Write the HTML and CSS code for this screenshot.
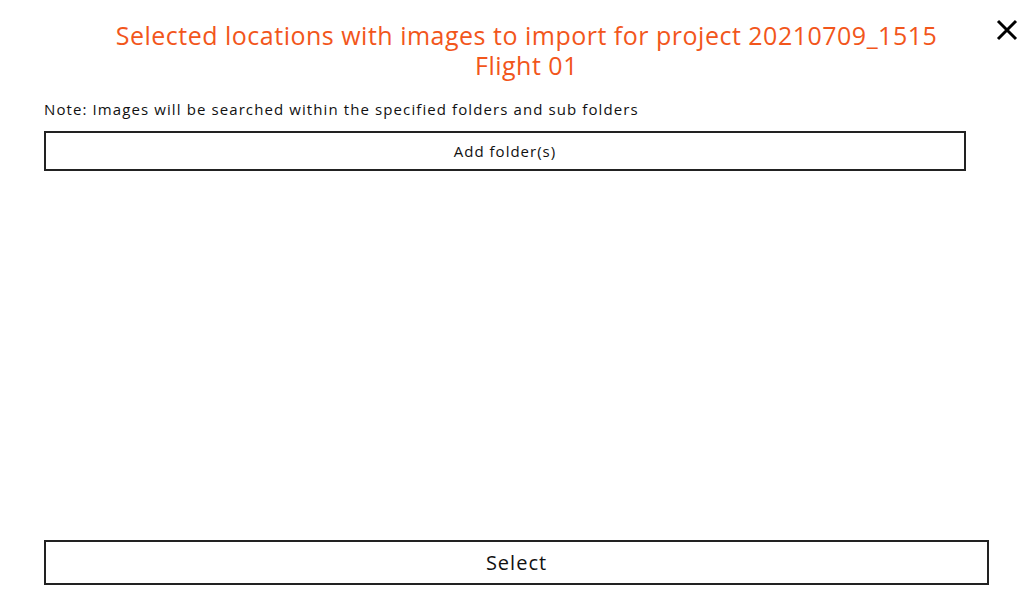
FILE: index.html
```html
<!DOCTYPE html>
<html lang="en">
<head>
<meta charset="utf-8">
<title>Select locations</title>
<link rel="stylesheet" href="styles.css">
</head>
<body>
<div class="dialog">
  <header class="dialog-header">
    <h1 class="dialog-title"><span class="title-line">Selected locations with images to import for project 20210709_1515</span><span class="title-line">Flight 01</span></h1>
    <button class="close-btn" aria-label="Close">
      <svg width="22" height="22" viewBox="0 0 22 22"><path d="M2 2 L20 20 M20 2 L2 20" stroke="#000" stroke-width="3" fill="none"/></svg>
    </button>
  </header>
  <p class="note">Note: Images will be searched within the specified folders and sub folders</p>
  <button class="add-btn">Add folder(s)</button>
  <div class="list"></div>
  <button class="select-btn">Select</button>
</div>
</body>
</html>
```

FILE: styles.css
```css
html, body {
  margin: 0;
  padding: 0;
  background: #fff;
}
body {
  font-family: "Open Sans", "Noto Sans", sans-serif;
  color: #111;
}
.dialog {
  height: 604px;
  box-sizing: border-box;
  padding: 20px 43px 19px 44px;
  display: flex;
  flex-direction: column;
  position: relative;
}
.dialog-header {
  display: flex;
  justify-content: center;
  padding-left: 20px;
}
.dialog-title {
  margin: 0;
  font-size: 25px;
  font-weight: 400;
  color: #f2561b;
  text-align: center;
  letter-spacing: 0.5px;
  display: flex;
  flex-direction: column;
  align-items: center;
}
.title-line {
  display: block;
  height: 30px;
  line-height: 30px;
}
.close-btn {
  position: absolute;
  top: 17px;
  right: 12px;
  width: 26px;
  height: 26px;
  padding: 0;
  border: 0;
  background: none;
  display: flex;
  align-items: center;
  justify-content: center;
  cursor: pointer;
}
.note {
  margin: 19px 0 12px;
  font-size: 15px;
  line-height: 20px;
  font-weight: 500;
  letter-spacing: 1.1px;
}
.add-btn {
  margin-right: 23px;
  height: 40px;
  border: 2px solid #222;
  background: #fff;
  font-family: inherit;
  font-size: 15px;
  font-weight: 500;
  color: #111;
  letter-spacing: 1px;
}
.list {
  flex: 1;
}
.select-btn {
  height: 45px;
  border: 2px solid #222;
  background: #fff;
  font-family: inherit;
  font-size: 20px;
  font-weight: 500;
  color: #111;
  letter-spacing: 1px;
}
```
